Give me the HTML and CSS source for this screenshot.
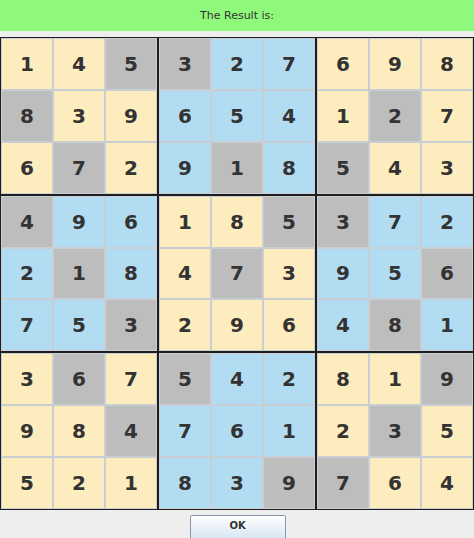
FILE: index.html
```html
<!DOCTYPE html>
<html>
<head>
<meta charset="utf-8">
<link rel="stylesheet" href="styles.css">
</head>
<body>
<div class="app">
  <div class="header">The Result is:</div>
  <div class="board" id="board"></div>
  <div class="footer"><button class="ok">OK</button></div>
</div>
<script src="app.js"></script>
</body>
</html>
```
FILE: app.js
```js
var digits = [
 "145327698","839654127","672918543",
 "496185372","218473956","753296481",
 "367542819","984761235","521839764"];
var gray = [
 "001100000","100000010","010010100",
 "100001100","010010001","001000010",
 "010100001","001000010","000001100"];
var board = document.getElementById('board');
for (var br = 0; br < 3; br++) {
  for (var bc = 0; bc < 3; bc++) {
    var box = document.createElement('div');
    box.className = 'box';
    var base = ((br + bc) % 2 === 0) ? 'y' : 'b';
    for (var r = 0; r < 3; r++) {
      for (var c = 0; c < 3; c++) {
        var R = br * 3 + r, C = bc * 3 + c;
        var cell = document.createElement('div');
        cell.className = 'cell ' + (gray[R][C] === '1' ? 'g' : base);
        cell.textContent = digits[R][C];
        box.appendChild(cell);
      }
    }
    board.appendChild(box);
  }
}
```
FILE: styles.css
```css
html, body {
  margin: 0;
  padding: 0;
  background: #eeeeee;
  overflow: hidden;
}
.app {
  width: 474px;
  height: 538px;
  overflow: hidden;
  display: flex;
  flex-direction: column;
  font-family: "DejaVu Sans", sans-serif;
}
.header {
  flex: none;
  height: 31px;
  background: #8ff97c;
  color: #333333;
  font-size: 11px;
  display: flex;
  align-items: center;
  justify-content: center;
  margin-bottom: 6px;
}
.board {
  flex: none;
  width: 474px;
  height: 473px;
  box-sizing: border-box;
  display: grid;
  grid-template-columns: repeat(3, 1fr);
  grid-template-rows: repeat(3, 1fr);
  background: #eeeeee;
}
.box {
  border: 1px solid #1e1e1e;
  display: grid;
  grid-template-columns: repeat(3, 1fr);
  grid-template-rows: repeat(3, 1fr);
}
.cell {
  border: 1px solid #c9ced4;
  display: flex;
  align-items: center;
  justify-content: center;
  font-weight: bold;
  font-size: 20px;
  color: #333333;
}
.cell.y { background: #fdecbd; }
.cell.b { background: #b2dcf1; }
.cell.g { background: #bdbdbd; }
.footer {
  flex: none;
  display: flex;
  justify-content: center;
  padding-top: 5px;
}
.ok {
  flex: none;
  width: 96px;
  height: 26px;
  margin-left: 1px;
  border: 1px solid #8a98aa;
  border-radius: 2px;
  background: linear-gradient(#ffffff, #d4e4f2);
  font-family: "DejaVu Sans", sans-serif;
  font-size: 10px;
  font-weight: bold;
  color: #333333;
  padding: 0 0 5px 0;
}
```
